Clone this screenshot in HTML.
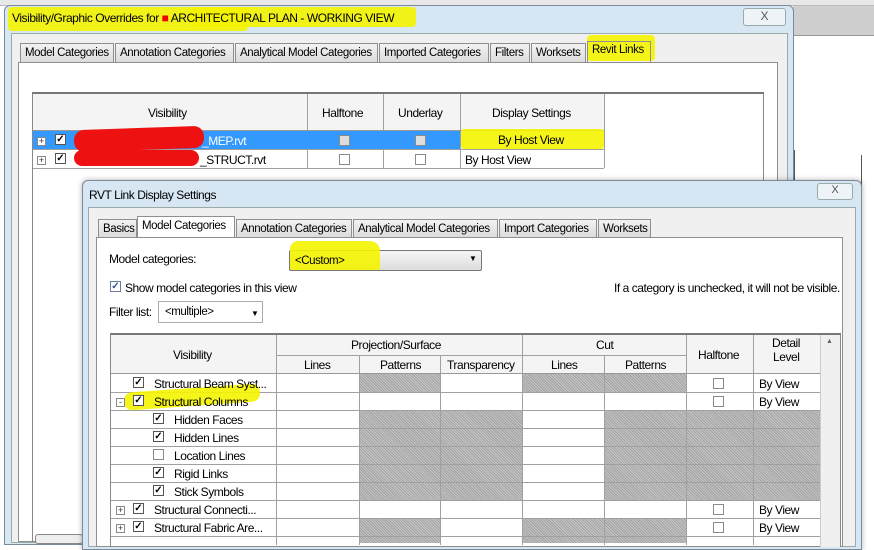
<!DOCTYPE html><html><head><style>
*{margin:0;padding:0;box-sizing:border-box}
body{width:874px;height:542px;overflow:hidden;background:#fff;font-family:"Liberation Sans",sans-serif;font-size:12px;color:#000;position:relative}
.a{position:absolute}
.t{position:absolute;white-space:nowrap;font-size:12px;letter-spacing:-0.45px}
.hl{position:absolute;background:#f4f400;border-radius:4px;opacity:.9}
.tab{position:absolute;border:1px solid #8e8f8f;border-bottom:none;background:linear-gradient(#f2f2f2,#dcdcdc);font-size:11.5px;letter-spacing:-.4px;padding:3px 0 0 4px;white-space:nowrap}
.cb{position:absolute;width:11px;height:11px;border:1px solid #555;background:#fff;font-size:10px;line-height:9px;text-align:center;font-weight:bold}
.ecb{position:absolute;width:11px;height:11px;border:1px solid #8a8a8a;background:#fff}
.hat{position:absolute;background-color:#c4c4c4;background-image:repeating-linear-gradient(45deg,#a4a4a4 0 1px,transparent 1px 2px);}
.vl{position:absolute;width:1px;background:#a0a0a0}
.hln{position:absolute;height:1px;background:#a0a0a0}
.pm{position:absolute;width:9px;height:9px;border:1px solid #8b8b8b;background:#fff;font-size:9px;line-height:7px;text-align:center;color:#333}
</style></head><body>
<div class="a" style="left:0;top:0;width:874px;height:6px;background:#e8e8e8;border-bottom:1px solid #bbb"></div>
<div class="a" style="left:793px;top:6px;width:81px;height:30px;background:#cfcfcf;border-bottom:1px solid #999"></div>
<div class="a" style="left:793px;top:150px;width:2px;height:35px;background:#555"></div>
<div class="a" style="left:861px;top:155px;width:1px;height:30px;background:#555"></div>
<div class="a" style="left:4px;top:5px;width:790px;height:540px;background:#d6e6f3;border:1px solid #7a8a99;border-radius:6px 6px 0 0"></div>
<div class="hl" style="left:8px;top:7px;width:240px;height:24px"></div>
<div class="hl" style="left:190px;top:7px;width:226px;height:20px"></div>
<div class="t" style="left:12px;top:11px">Visibility/Graphic Overrides for <span style="color:#e00;font-weight:bold">&#9632;</span> ARCHITECTURAL PLAN - WORKING VIEW</div>
<div class="a" style="left:743px;top:8px;width:43px;height:18px;border:1px solid #9aa;border-radius:3px;background:#eef3f7;text-align:center;color:#555;font-size:12px">X</div>
<div class="a" style="left:11px;top:33px;width:777px;height:510px;background:#f0f0f0;border:1px solid #9aa"></div>
<div class="tab" style="left:20px;top:43px;width:94px;height:19px">Model Categories</div>
<div class="tab" style="left:115px;top:43px;width:119px;height:19px">Annotation Categories</div>
<div class="tab" style="left:235px;top:43px;width:143px;height:19px">Analytical Model Categories</div>
<div class="tab" style="left:379px;top:43px;width:110px;height:19px">Imported Categories</div>
<div class="tab" style="left:490px;top:43px;width:40px;height:19px">Filters</div>
<div class="tab" style="left:531px;top:43px;width:55px;height:19px">Worksets</div>
<div class="hl" style="left:587px;top:35px;width:68px;height:26px"></div>
<div class="tab" style="left:587px;top:41px;width:64px;height:22px;background:transparent;padding-top:2px">Revit Links</div>
<div class="a" style="left:18px;top:62px;width:760px;height:480px;background:#fff;border:1px solid #8e8f8f"></div>
<div class="a" style="left:32px;top:92px;width:732px;height:450px;border:1px solid #888;border-top:2px solid #777;background:#fff"></div>
<div class="a" style="left:33px;top:94px;width:571px;height:37px;background:#f4f4f4;border-bottom:1px solid #999"></div>
<div class="vl" style="left:307px;top:94px;height:74px"></div>
<div class="vl" style="left:383px;top:94px;height:74px"></div>
<div class="vl" style="left:460px;top:94px;height:74px"></div>
<div class="vl" style="left:604px;top:94px;height:74px"></div>
<div class="t" style="left:148px;top:106px">Visibility</div>
<div class="t" style="left:322px;top:106px">Halftone</div>
<div class="t" style="left:398px;top:106px">Underlay</div>
<div class="t" style="left:492px;top:106px">Display Settings</div>
<div class="a" style="left:33px;top:131px;width:427px;height:18px;background:#3399ff"></div>
<div class="hln" style="left:33px;top:149px;width:571px"></div>
<div class="hln" style="left:33px;top:168px;width:571px"></div>
<div class="pm" style="left:37px;top:137px">+</div><div class="pm" style="left:37px;top:156px">+</div>
<div class="cb" style="left:55px;top:134px">&#10003;</div><div class="cb" style="left:55px;top:153px">&#10003;</div>
<div class="a" style="left:74px;top:128px;width:130px;height:22px;background:#ee1111;border-radius:10px;transform:rotate(-2deg)"></div>
<div class="a" style="left:74px;top:150px;width:125px;height:16px;background:#ee1111;border-radius:8px"></div>
<div class="t" style="left:202px;top:134px;color:#fff">_MEP.rvt</div>
<div class="t" style="left:200px;top:153px">_STRUCT.rvt</div>
<div class="ecb" style="left:339px;top:135px;background:#ddd"></div><div class="ecb" style="left:415px;top:135px;background:#ddd"></div>
<div class="ecb" style="left:339px;top:154px"></div><div class="ecb" style="left:415px;top:154px"></div>
<div class="hl" style="left:461px;top:129px;width:143px;height:20px;border-radius:3px"></div>
<div class="t" style="left:498px;top:133px">By Host View</div>
<div class="t" style="left:465px;top:153px">By Host View</div>
<div class="a" style="left:35px;top:534px;width:48px;height:10px;border:1px solid #888;background:#eee;border-radius:3px"></div>
<div class="a" style="left:82px;top:180px;width:780px;height:370px;background:#d6e6f3;border:1px solid #7a8a99;border-radius:6px 6px 0 0;box-shadow:0 0 6px rgba(0,0,0,.3)"></div>
<div class="t" style="left:89px;top:188px">RVT Link Display Settings</div>
<div class="a" style="left:817px;top:183px;width:36px;height:17px;border:1px solid #9aa;border-radius:3px;background:#eef3f7;text-align:center;color:#555;font-size:11px">X</div>
<div class="a" style="left:88px;top:207px;width:768px;height:340px;background:#f0f0f0;border:1px solid #9aa"></div>
<div class="tab" style="left:98px;top:219px;width:39px;height:18px">Basics</div>
<div class="tab" style="left:137px;top:216px;width:98px;height:22px;background:#fff;padding-top:3px">Model Categories</div>
<div class="tab" style="left:236px;top:219px;width:116px;height:18px">Annotation Categories</div>
<div class="tab" style="left:353px;top:219px;width:145px;height:18px">Analytical Model Categories</div>
<div class="tab" style="left:499px;top:219px;width:98px;height:18px">Import Categories</div>
<div class="tab" style="left:598px;top:219px;width:53px;height:18px">Worksets</div>
<div class="a" style="left:96px;top:237px;width:747px;height:310px;background:#fff;border:1px solid #8e8f8f"></div>
<div class="t" style="left:109px;top:252px">Model categories:</div>
<div class="a" style="left:289px;top:250px;width:193px;height:21px;border:1px solid #777;border-radius:2px;background:linear-gradient(#f5f5f5,#ddd)"></div>
<div class="hl" style="left:290px;top:241px;width:90px;height:29px;border-radius:8px 10px 2px 2px"></div>
<div class="t" style="left:295px;top:255px;font-size:11.5px">&lt;Custom&gt;</div>
<div class="t" style="left:469px;top:254px;font-size:8px">&#9660;</div>
<div class="cb" style="left:110px;top:281px;border-color:#6a7fa0;color:#3050a0">&#10003;</div>
<div class="t" style="left:125px;top:281px">Show model categories in this view</div>
<div class="t" style="left:614px;top:281px">If a category is unchecked, it will not be visible.</div>
<div class="t" style="left:109px;top:305px">Filter list:</div>
<div class="a" style="left:158px;top:301px;width:105px;height:22px;border:1px solid #aaa;background:#fff"></div>
<div class="t" style="left:165px;top:306px;font-size:11.5px">&lt;multiple&gt;</div>
<div class="t" style="left:251px;top:309px;font-size:8px">&#9660;</div>
<div class="a" style="left:110px;top:333px;width:731px;height:214px;border:1px solid #888;border-top:2px solid #777;background:#fff"></div>
<div class="a" style="left:111px;top:335px;width:709px;height:39px;background:#f4f4f4;border-bottom:1px solid #999"></div>
<div class="a" style="left:820px;top:335px;width:20px;height:212px;background:#f0f0f0;border-left:1px solid #ccc"></div>
<div class="t" style="left:826px;top:338px;font-size:7px;color:#666">&#9650;</div>
<div class="hln" style="left:276px;top:355px;width:410px"></div>
<div class="t" style="left:173px;top:348px">Visibility</div>
<div class="t" style="left:351px;top:338px">Projection/Surface</div>
<div class="t" style="left:596px;top:338px">Cut</div>
<div class="t" style="left:698px;top:348px">Halftone</div>
<div class="t" style="left:772px;top:336px">Detail</div>
<div class="t" style="left:773px;top:350px">Level</div>
<div class="t" style="left:304px;top:358px">Lines</div>
<div class="t" style="left:380px;top:358px">Patterns</div>
<div class="t" style="left:447px;top:358px">Transparency</div>
<div class="t" style="left:551px;top:358px">Lines</div>
<div class="t" style="left:625px;top:358px">Patterns</div>
<div class="hat" style="left:359px;top:374px;width:81px;height:18px"></div>
<div class="hat" style="left:522px;top:374px;width:164px;height:18px"></div>
<div class="hat" style="left:359px;top:410px;width:163px;height:90px"></div>
<div class="hat" style="left:604px;top:410px;width:216px;height:90px"></div>
<div class="hat" style="left:359px;top:518px;width:81px;height:18px"></div>
<div class="hat" style="left:522px;top:518px;width:164px;height:18px"></div>
<div class="hat" style="left:359px;top:537px;width:81px;height:6px"></div>
<div class="hat" style="left:522px;top:537px;width:164px;height:6px"></div>
<div class="vl" style="left:276px;top:335px;height:210px"></div>
<div class="vl" style="left:359px;top:355px;height:190px"></div>
<div class="vl" style="left:440px;top:355px;height:190px"></div>
<div class="vl" style="left:522px;top:335px;height:210px"></div>
<div class="vl" style="left:604px;top:355px;height:190px"></div>
<div class="vl" style="left:686px;top:335px;height:210px"></div>
<div class="vl" style="left:753px;top:335px;height:210px"></div>
<div class="hln" style="left:111px;top:392px;width:709px"></div>
<div class="hln" style="left:111px;top:410px;width:709px"></div>
<div class="hln" style="left:111px;top:428px;width:709px"></div>
<div class="hln" style="left:111px;top:446px;width:709px"></div>
<div class="hln" style="left:111px;top:464px;width:709px"></div>
<div class="hln" style="left:111px;top:482px;width:709px"></div>
<div class="hln" style="left:111px;top:500px;width:709px"></div>
<div class="hln" style="left:111px;top:518px;width:709px"></div>
<div class="hln" style="left:111px;top:536px;width:709px"></div>
<div class="hl" style="left:124px;top:388px;width:136px;height:18px;transform:rotate(-4deg);border-radius:8px"></div>
<div class="cb" style="left:133px;top:377px">&#10003;</div><div class="t" style="left:154px;top:377px">Structural Beam Syst...</div>
<div class="pm" style="left:116px;top:398px">-</div>
<div class="cb" style="left:133px;top:395px">&#10003;</div><div class="t" style="left:154px;top:395px">Structural Columns</div>
<div class="cb" style="left:153px;top:413px">&#10003;</div><div class="t" style="left:174px;top:413px">Hidden Faces</div>
<div class="cb" style="left:153px;top:431px">&#10003;</div><div class="t" style="left:174px;top:431px">Hidden Lines</div>
<div class="ecb" style="left:153px;top:449px"></div><div class="t" style="left:174px;top:449px">Location Lines</div>
<div class="cb" style="left:153px;top:467px">&#10003;</div><div class="t" style="left:174px;top:467px">Rigid Links</div>
<div class="cb" style="left:153px;top:485px">&#10003;</div><div class="t" style="left:174px;top:485px">Stick Symbols</div>
<div class="pm" style="left:116px;top:506px">+</div>
<div class="cb" style="left:133px;top:503px">&#10003;</div><div class="t" style="left:154px;top:503px">Structural Connecti...</div>
<div class="pm" style="left:116px;top:524px">+</div>
<div class="cb" style="left:133px;top:521px">&#10003;</div><div class="t" style="left:154px;top:521px">Structural Fabric Are...</div>
<div class="ecb" style="left:713px;top:378px"></div><div class="t" style="left:759px;top:377px">By View</div>
<div class="ecb" style="left:713px;top:396px"></div><div class="t" style="left:759px;top:395px">By View</div>
<div class="ecb" style="left:713px;top:504px"></div><div class="t" style="left:759px;top:503px">By View</div>
<div class="ecb" style="left:713px;top:522px"></div><div class="t" style="left:759px;top:521px">By View</div>
</body></html>
